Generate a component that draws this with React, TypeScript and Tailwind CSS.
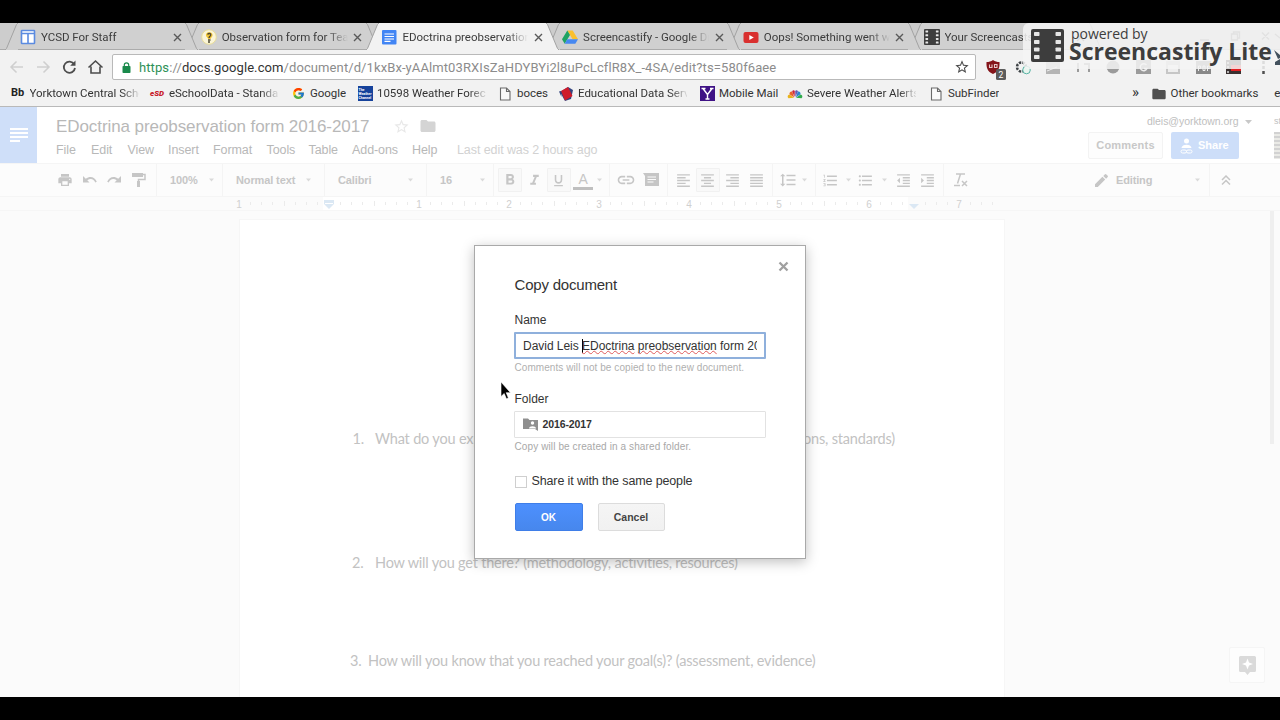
import type { ReactNode } from 'react';
import clsx from 'clsx';
import { FcGoogle } from 'react-icons/fc';
import {
  MdFormatAlignCenter,
  MdFormatAlignJustify,
  MdFormatAlignLeft,
  MdFormatAlignRight,
  MdFormatBold,
  MdFormatIndentDecrease,
  MdFormatIndentIncrease,
  MdFormatItalic,
  MdFormatLineSpacing,
  MdFormatListBulleted,
  MdFormatListNumbered,
  MdFormatUnderlined,
  MdFolder,
  MdInsertLink,
  MdPrint,
  MdStarBorder,
} from 'react-icons/md';

// ─── Favicons ────────────────────────────────────────────────────────────────

function SitesIcon() {
  return (
    <svg width="16" height="16" viewBox="0 0 16 16">
      <rect x="1.5" y="1.5" width="13" height="13" rx="0.5" fill="#fff" stroke="#5b8be0" strokeWidth="1.6" />
      <path d="M1 4.500h14M8 5v10" stroke="#5b8be0" strokeWidth="1.600" />
    </svg>
  );
}

function BulbIcon() {
  return (
    <svg width="16" height="16" viewBox="0 0 16 16">
      <circle cx="8" cy="8" r="7.3" fill="#faf5d8" stroke="#e8dc98" />
      <path d="M8 3.200c3 0 4 2 3.400 3.800-.4 1.300-1.600 1.800-1.800 3H7.200C7 8.800 5.500 8.200 5 6.800 4.500 5 5.700 3.200 8 3.200z" fill="#f0c436" />
      <path d="M6.500 5.500c1-1.600 3.500-1.200 3.300.5C9.600 7.300 8 7.400 8 9M7 11h2.500M7 13h2" stroke="#4a4430" strokeWidth="1.300" fill="none" />
    </svg>
  );
}

function DocsIcon() {
  return (
    <svg width="16" height="16" viewBox="0 0 16 16">
      <rect x="1" y="1" width="14.500" height="14.500" rx="1" fill="#4285f4" />
      <path d="M3.500 5h9.500M3.500 7.500h9.500M3.500 10h9.500M3.500 12.300h6" stroke="#fff" strokeWidth="1.200" />
    </svg>
  );
}

function DriveIcon() {
  return (
    <svg width="16" height="16" viewBox="0 0 16 16">
      <path d="M5.300 1.500h5.400L16 10.300h-5.400z" fill="#fbc02d" />
      <path d="M5.300 1.500L8 6 2.700 14.800 0 10.300z" fill="#1ea362" />
      <path d="M5.300 10.300H16l-2.700 4.500H2.700z" fill="#4688f1" />
    </svg>
  );
}

function YoutubeIcon() {
  return (
    <svg width="16" height="16" viewBox="0 0 16 16">
      <rect x="0.500" y="3" width="15" height="11" rx="2" fill="#d9302f" />
      <path d="M6.300 6v5l4.500-2.500z" fill="#fff" />
    </svg>
  );
}

function FilmIcon({ size = 16, className }: { size?: number; className?: string }) {
  return (
    <svg width={size} height={size} viewBox="0 0 33 33" className={className}>
      <rect width="33" height="33" rx="2" fill="#3d3d3d" />
      <g fill="#e6e6e6">
        {[3, 11, 18.500, 26].map((y) => (
          <g key={y}>
            <rect x="3" y={y} width="5.500" height="4" rx="0.800" />
            <rect x="24.500" y={y} width="5.500" height="4" rx="0.800" />
          </g>
        ))}
      </g>
    </svg>
  );
}

function PageIcon() {
  return (
    <svg width="16" height="16" viewBox="0 0 16 16" fill="none" stroke="#6a6a6a" strokeWidth="1.100">
      <path d="M3.500 2h6l3.500 3.500V14h-9.500z" fill="#fafafa" />
      <path d="M9.500 2v3.500H13" />
    </svg>
  );
}

function PeacockIcon() {
  return (
    <svg width="16" height="16" viewBox="0 0 16 16">
      <path d="M7 11.800L1.500 12.300C0 11 .5 8.800 2.500 8.500z" fill="#e9b31c" />
      <path d="M7.200 11.500L2.500 8.200C2.200 6 4 5 5.300 5.600z" fill="#e8622c" />
      <path d="M7.600 11L5.300 5.500C5.500 4 7.300 3.800 7.800 5z" fill="#c9263c" />
      <path d="M8.400 11L8.200 5c.6-1.200 2.400-1 2.700.5z" fill="#6a55b0" />
      <path d="M8.800 11.500l2-5.900c1.500-.6 3 .6 2.700 2.600z" fill="#2b85cf" />
      <path d="M9 11.800l4.500-3.300c2 .3 2.500 2.500 1 3.800z" fill="#2fab4c" />
    </svg>
  );
}

// ─── Browser tabs ────────────────────────────────────────────────────────────

interface Tab {
  title: string;
  icon: ReactNode;
  z: string;
  active?: boolean;
}

const TABS: Tab[] = [
  { title: 'YCSD For Staff', icon: <SitesIcon />, z: 'z-[6]' },
  { title: 'Observation form for Teachers', icon: <BulbIcon />, z: 'z-[5]' },
  { title: 'EDoctrina preobservation form', icon: <DocsIcon />, z: 'z-[8]', active: true },
  { title: 'Screencastify - Google Drive', icon: <DriveIcon />, z: 'z-[4]' },
  { title: 'Oops! Something went wrong', icon: <YoutubeIcon />, z: 'z-[3]' },
  { title: 'Your Screencasts', icon: <FilmIcon />, z: 'z-[2]' },
];

function BrowserTab({ title, icon, z, active }: Tab) {
  const fill = active ? '#f2f2f2' : '#d0d0d0';
  return (
    <div className={clsx('relative -mr-[12.300px] flex h-[27px] w-[193px] shrink-0', z)}>
      <svg width="13" height="27" viewBox="0 0 13 27" className="shrink-0">
        <path d="M0 27L1.500 25.500 11.500 1.500 13 0v27z" fill={fill} />
        <path d="M0 27L1.500 25.500 11.500 1.500 13 0" fill="none" stroke="#a3a3a3" />
      </svg>
      <div
        className={clsx(
          'flex w-[167px] items-center border-b pt-[2px] pl-[2px]',
          active ? 'border-[#f2f2f2] bg-[#f2f2f2]' : 'border-[#ababab] bg-[#d0d0d0]',
        )}
      >
        <span className="flex w-4 shrink-0 justify-center">{icon}</span>
        <span className="ml-[5px] w-[126px] shrink-0 overflow-hidden pt-px text-[11.500px] tracking-[-0.030px] whitespace-nowrap text-[#3c3c3c] [mask-image:linear-gradient(to_right,black_105px,transparent_126px)]">
          {title}
        </span>
        <svg width="9" height="9" viewBox="0 0 9 9" className="ml-[5.500px] shrink-0">
          <path d="M1 1l7 7M8 1L1 8" stroke="#5a5a5a" strokeWidth="1.400" />
        </svg>
      </div>
      <svg width="13" height="27" viewBox="0 0 13 27" className="shrink-0">
        <path d="M13 27l-1.500-1.500L1.500 1.500 0 0v27z" fill={fill} />
        <path d="M13 27l-1.500-1.500L1.500 1.500 0 0" fill="none" stroke="#a3a3a3" />
      </svg>
    </div>
  );
}

// ─── Address bar ─────────────────────────────────────────────────────────────

function AddressRow() {
  return (
    <div className="flex h-[34px] items-center">
      <div className="flex w-[112px] shrink-0 items-center">
        <svg width="112" height="18" viewBox="0 0 112 18" fill="none" strokeWidth="1.500">
          <path d="M23 9H11M16.500 3.500L11 9l5.500 5.500M37 9h12M43.500 3.500L49 9l-5.500 5.500" stroke="#cfcfcf" />
          <path d="M74.200 6.200A5.600 5.600 0 1 0 75 10" stroke="#4d4d4d" strokeWidth="1.800" />
          <path d="M75.500 2.500v5.300h-5.300z" fill="#4d4d4d" />
          <path d="M88.500 9.500L95.500 3l7 6.500M91 8.500V15h9V8.500" stroke="#4d4d4d" strokeWidth="1.600" />
        </svg>
      </div>
      <div className="flex h-[26px] w-[864px] shrink-0 items-center rounded-[2px] border border-[#b9b9b9] bg-white pl-[9px]">
        <svg width="9" height="11" viewBox="0 0 9 11">
          <rect x="0.500" y="4" width="8" height="7" rx="0.800" fill="#1a8a4c" />
          <path d="M2.300 4.500V3a2.200 2.200 0 0 1 4.400 0v1.500" fill="none" stroke="#1a8a4c" strokeWidth="1.200" />
        </svg>
        <span className="ml-[8px] pt-px text-[13px] tracking-[0.095px] whitespace-nowrap text-[#8c8c8c]">
          <span className="text-[#2e9157]">https</span>://<span className="text-[#333]">docs.google.com</span>
          /document/d/1kxBx-yAAlmt03RXIsZaHDYBYi2l8uPcLcflR8X_-4SA/edit?ts=580f6aee
        </span>
        <MdStarBorder className="mr-[5px] ml-auto h-[16px] w-[16px] text-[#4a4a4a]" />
      </div>
      <Extensions />
    </div>
  );
}

function Extensions() {
  return (
    <svg width="304" height="26" viewBox="976 54 304 26" className="shrink-0">
      {/* uBlock shield with its counter */}
      <path d="M993 60c2 1.500 4 2 6.500 2 .3 6-1 9.500-6.500 12-5.500-2.500-6.800-6-6.500-12 2.500 0 4.500-.5 6.500-2z" fill="#84141a" />
      <path d="M989.500 64.500v3h2.500v-3M994.500 64.500h2.500v3h-2.500z" fill="none" stroke="#e6c7c8" strokeWidth="1.100" />
      <rect x="996" y="69" width="10" height="11" rx="1.500" fill="#5c5c5c" />
      <text x="998.500" y="77.800" fontSize="8.500" fill="#fff">2</text>
      <circle cx="1021.500" cy="67" r="4.500" fill="none" stroke="#3d4245" strokeWidth="2.500" strokeDasharray="2.400 1.200" />
      <circle cx="1026.500" cy="70" r="3.800" fill="#e9f5ef" stroke="#56b3a4" />
      <g fill="#9b9b9b">
        <path d="M1046 61h14v13h-14z" fill="#b5b5b5" />
        <path d="M1047 71l10-4" stroke="#eee" />
        <path d="M1077 63h2v9h-2zM1084 63h6v2h-6zM1088 65h2v7h-2z" />
        <circle cx="1113" cy="67" r="6.500" />
        <path d="M1136 60h15v14h-15z" />
        <path d="M1166 61h14v13h-14z" fill="#c6c6c6" />
        <path d="M1168 65h10v7h-10z" fill="#eee" />
        <path d="M1196 61h15v13h-15z" fill="#888" />
      </g>
      {/* G and PDF badges */}
      <path d="M1146.500 65a3.500 3.500 0 1 0 .5 3.500h-3" fill="none" stroke="#eee" strokeWidth="1.400" />
      <path d="M1198.500 71v-5h2v2.500h-2M1203 66v4.500h2v-4.500zM1207.500 71v-5h2.500M1207.500 68.500h2" fill="none" stroke="#eee" />
      <rect x="1226" y="60" width="15" height="14" fill="#3a3030" />
      <rect x="1231" y="65" width="10" height="6" fill="#e21e22" />
      <path d="M1228 62v2M1228 66v2M1228 71v2" stroke="#ddd" strokeWidth="1.500" />
      <path d="M1263.500 61v3M1263.500 66v3M1263.500 71v3" stroke="#505050" strokeWidth="2.500" />
    </svg>
  );
}

// ─── Bookmarks bar ───────────────────────────────────────────────────────────

interface Bookmark {
  label: string;
  icon: ReactNode;
  width: string;
  fade?: boolean;
}

const BOOKMARKS: Bookmark[] = [
  { label: 'Yorktown Central School', icon: <span className="text-[11px] font-bold text-[#222]">Bb</span>, width: 'w-[139.500px]', fade: true },
  { label: 'eSchoolData - Standard', icon: <span className="text-[8px] font-black text-[#c8202c] italic">eSD</span>, width: 'w-[141px]', fade: true },
  { label: 'Google', icon: <FcGoogle className="h-[13px] w-[13px]" />, width: 'w-[67px]' },
  {
    label: '10598 Weather Forecast',
    icon: (
      <span className="flex h-[15px] w-[15px] flex-col justify-center overflow-hidden bg-[#16429b] pl-px text-[3.500px] leading-[4px] font-bold text-white">
        <span>The</span>
        <span>Weather</span>
        <span>Channel</span>
      </span>
    ),
    width: 'w-[140px]',
    fade: true,
  },
  { label: 'boces', icon: <PageIcon />, width: 'w-[61px]' },
  {
    label: 'Educational Data Services',
    icon: (
      <svg width="16" height="16" viewBox="0 0 16 16">
        <path d="M2 6l8-5 5 3-2 9-6 2z" fill="#33447f" />
        <path d="M3 5l7-4 4.500 9L7 14.500z" fill="#cf1b2a" />
        <path d="M3 5L1 5.500 3.500 11z" fill="#33447f" />
      </svg>
    ),
    width: 'w-[141px]',
    fade: true,
  },
  {
    label: 'Mobile Mail',
    icon: (
      <svg width="15" height="15" viewBox="0 0 15 15">
        <path d="M0 0h15v15H0z" fill="#3f1285" />
        <path d="M3 2.500l4.500 6 4.500-6M7.500 8v5M1.500 2.500h4M10 2.500h3.500M5.500 13h4" fill="none" stroke="#fff" strokeWidth="1.400" />
      </svg>
    ),
    width: 'w-[88px]',
  },
  { label: 'Severe Weather Alerts', icon: <PeacockIcon />, width: 'w-[141px]', fade: true },
  { label: 'SubFinder', icon: <PageIcon />, width: 'w-[80px]' },
];

function BookmarksBar() {
  return (
    <div className="flex h-[23px] items-center border-b border-[#b9b9b9] pb-[3px] pl-[9.500px] text-[11.500px] tracking-[-0.030px] text-[#333]">
      {BOOKMARKS.map((b) => (
        <div key={b.label} className={clsx('flex shrink-0 items-center', b.width)}>
          <span className="flex w-4 shrink-0 justify-center">{b.icon}</span>
          <span
            className={clsx(
              'ml-1 overflow-hidden whitespace-nowrap',
              b.fade && 'w-[109px] [mask-image:linear-gradient(to_right,black_92px,transparent_111px)]',
            )}
          >
            {b.label}
          </span>
        </div>
      ))}
      <span className="ml-[124px] pb-[2px] text-[15px] leading-none">»</span>
      <MdFolder className="ml-[11.500px] h-4 w-4 shrink-0 text-[#505050]" />
      <span className="ml-[4px] whitespace-nowrap">Other bookmarks</span>
      <span className="ml-[16px] w-[6px] overflow-hidden whitespace-nowrap">es</span>
    </div>
  );
}

// ─── Recorder watermark ──────────────────────────────────────────────────────

function Watermark() {
  return (
    <div className="absolute top-0 right-0 z-20 flex h-[46px] w-[257px] overflow-hidden rounded-l-md bg-[#f5f5f5]/85 pt-[6px] pl-[8px] font-['Open_Sans','Noto_Sans',sans-serif] text-[#3d3d3d]">
      <FilmIcon size={33} className="shrink-0" />
      <div className="-mt-px ml-[5px] whitespace-nowrap">
        <div className="pl-[2px] text-[14px] leading-[11px] tracking-[-0.050px]">powered by</div>
        <div className="text-[23px] leading-[24px] font-bold">Screencastify Lite</div>
      </div>
      <svg width="6" height="16" viewBox="0 0 6 16" className="mt-[21px] ml-[2px] shrink-0">
        <path d="M0 0l6 5v3L4 9zM1 12l5-3v6H1z" fill="#44525e" />
      </svg>
    </div>
  );
}

function WindowButtons() {
  return (
    <svg width="80" height="27" viewBox="0 0 80 27" className="ml-auto shrink-0" fill="none" stroke="#777" strokeWidth="1.300">
      <path d="M0 17h9M31.500 11h6v6h-6zM33.500 11V9h6v6h-2M62 9.500l7 7M69 9.500l-7 7M75 11l5 4" />
    </svg>
  );
}

// ─── Docs header ─────────────────────────────────────────────────────────────

const MENU = [
  { label: 'File', width: 'w-[35px]' },
  { label: 'Edit', width: 'w-[36.500px]' },
  { label: 'View', width: 'w-[40.500px]' },
  { label: 'Insert', width: 'w-[45px]' },
  { label: 'Format', width: 'w-[53.500px]' },
  { label: 'Tools', width: 'w-[42px]' },
  { label: 'Table', width: 'w-[43.500px]' },
  { label: 'Add-ons', width: 'w-[60px]' },
  { label: 'Help', width: 'w-[45px]' },
];

function DocsHeader() {
  return (
    <div className="flex h-[56px] bg-white">
      <div className="flex w-[37px] items-center justify-center bg-[#cfdff9]">
        <svg width="18" height="14" viewBox="0 0 18 14">
          <path d="M0 1h18M0 5h18M0 9h18M0 13h10" stroke="#fff" strokeWidth="1.800" />
        </svg>
      </div>
      <div className="ml-[19px] flex flex-col pt-[8px]">
        <div className="flex h-[22px] items-center">
          <span className="w-[337px] pt-px text-[17px] tracking-[-0.080px] whitespace-nowrap text-[#b8b8b8]">
            EDoctrina preobservation form 2016-2017
          </span>
          <MdStarBorder className="h-[17px] w-[17px] text-[#e8e8e8]" />
          <MdFolder className="ml-[9px] h-[18px] w-[18px] text-[#d4d4d4]" />
        </div>
        <div className="mt-[4px] flex h-[18px] items-center text-[12.500px] tracking-[-0.080px] text-[#b8b8b8]">
          {MENU.map((m) => (
            <span key={m.label} className={m.width}>
              {m.label}
            </span>
          ))}
          <span className="whitespace-nowrap text-[#d2d2d2]">Last edit was 2 hours ago</span>
        </div>
      </div>
      <div className="ml-auto flex w-[192px] flex-col pt-[7px]">
        <div className="flex h-[15px] items-center pl-[59px] text-[10.500px] tracking-[-0.050px] text-[#c0c0c0]">
          <span className="w-[98px]">dleis@yorktown.org</span>
          <Caret />
          <span className="ml-[22px] w-[6px] overflow-hidden text-[9px]">st</span>
        </div>
        <div className="mt-[3px] flex h-[27px] items-center text-[11px] font-bold">
          <span className="flex h-[27px] w-[75px] items-center justify-center rounded-[2px] border border-[#f3f3f3] bg-[#fdfdfd] tracking-[0.200px] text-[#c8c8c8]">
            Comments
          </span>
          <span className="ml-[8px] flex h-[27px] w-[68px] items-center rounded-[2px] bg-[#cddef9] pl-[9px] text-white">
            <svg width="13" height="16" viewBox="0 0 13 16" fill="#fff">
              <circle cx="6.500" cy="3" r="2.500" />
              <path d="M1.500 10C1.500 5.500 11.500 5.500 11.500 10z" />
              <path d="M1 13.500a1.500 1.500 0 0 1 1.500-1.500H5a1.500 1.500 0 0 1 0 3H2.500A1.500 1.500 0 0 1 1 13.500zM6.500 13.500A1.500 1.500 0 0 1 8 12h2.500a1.500 1.500 0 0 1 0 3H8a1.500 1.500 0 0 1-1.500-1.500z" fill="none" stroke="#fff" />
            </svg>
            <span className="ml-[5px]">Share</span>
          </span>
          <span className="ml-auto h-[27px] w-[6px] bg-[repeating-linear-gradient(#d2d2d2_0_2px,#eaeae6_2px_4px)]" />
        </div>
      </div>
    </div>
  );
}

// ─── Docs toolbar ────────────────────────────────────────────────────────────

function Caret({ small }: { small?: boolean }) {
  return (
    <svg width="7" height="4" viewBox="0 0 7 4" className="shrink-0">
      <path d={small ? 'M1 0.500h5L3.500 3.500z' : 'M0 0h7L3.500 4z'} fill={small ? '#dadada' : '#c8c8c8'} />
    </svg>
  );
}

function Cell({ children, width = 'w-[24.500px]', on }: { children: ReactNode; width?: string; on?: boolean }) {
  return (
    <span
      className={clsx(
        'flex h-[24px] shrink-0 items-center justify-center',
        width,
        on && 'rounded-[1px] border border-[#f1f1f1] bg-[#f9f9f9]',
      )}
    >
      {children}
    </span>
  );
}

function Group({ children, width }: { children?: ReactNode; width: string }) {
  return <div className={clsx('flex h-full shrink-0 items-center border-l border-[#f4f4f4]', width)}>{children}</div>;
}

function Picker({ label, width, inset = 'mr-[7px]' }: { label: string; width: string; inset?: string }) {
  return (
    <Group width={width}>
      <span className="ml-[13px] tracking-[-0.120px] whitespace-nowrap">{label}</span>
      <span className={clsx('ml-auto', inset)}>
        <Caret small />
      </span>
    </Group>
  );
}

function UndoArrow({ flip }: { flip?: boolean }) {
  return (
    <svg width="14" height="8" viewBox="0 0 14 8" className={clsx(flip && '-scale-x-100')}>
      <path
        d="M0 0v6.500h6.500L4.300 4.300C7.500 1.800 11 3 12.200 6.500l1.600-.7C11.800.5 6.500-.2 2.800 2.800z"
        fill="currentColor"
      />
    </svg>
  );
}

function DocsToolbar() {
  return (
    <div className="flex h-[34px] items-center border-y border-[#f5f5f5] bg-[#fcfcfc] text-[11px] font-bold text-[#c6c6c6]">
      <div className="flex w-[156px] shrink-0 items-center pl-[53px]">
        <Cell>
          <MdPrint className="h-[16px] w-[16px]" />
        </Cell>
        <Cell>
          <UndoArrow />
        </Cell>
        <Cell>
          <UndoArrow flip />
        </Cell>
        <Cell>
          <svg width="14" height="16" viewBox="0 0 14 16">
            <path d="M0 1h11v4H0z" fill="currentColor" />
            <path d="M11 2.500h2V7.500H6.500V15" fill="none" stroke="currentColor" strokeWidth="1.500" />
            <path d="M5 9h3v6H5z" fill="currentColor" />
          </svg>
        </Cell>
      </div>
      <Picker label="100%" width="w-[66px]" />
      <Picker label="Normal text" width="w-[102px]" inset="mr-[12px]" />
      <Picker label="Calibri" width="w-[102px]" inset="mr-[12px]" />
      <Picker label="16" width="w-[67px]" />
      <Group width="w-[116px]">
        <span className="w-[3.500px]" />
        <Cell on>
          <MdFormatBold className="h-[18px] w-[18px]" />
        </Cell>
        <Cell>
          <MdFormatItalic className="h-[17px] w-[17px]" />
        </Cell>
        <Cell on>
          <MdFormatUnderlined className="h-[15px] w-[15px]" />
        </Cell>
        <Cell>
          <span className="flex flex-col items-center pt-[2px] text-[14px] leading-[15px] font-normal">
            A
            <span className="h-[3px] w-[20px] bg-[#bfbfbf]" />
          </span>
        </Cell>
        <Caret small />
      </Group>
      <Group width="w-[58px]">
        <span className="w-[4px]" />
        <Cell>
          <MdInsertLink className="h-[20px] w-[20px]" />
        </Cell>
        <Cell>
          <svg width="16" height="15" viewBox="0 0 16 15">
            <path d="M0 0h16v13H2V3z" fill="currentColor" />
            <path d="M4.500 4h8.500M4.500 6.500h8.500M4.500 9h6" stroke="#fcfcfc" />
          </svg>
        </Cell>
      </Group>
      <Group width="w-[105px]">
        <span className="w-[3px]" />
        <Cell>
          <MdFormatAlignLeft className="h-[17px] w-[17px]" />
        </Cell>
        <Cell on>
          <MdFormatAlignCenter className="h-[17px] w-[17px]" />
        </Cell>
        <Cell>
          <MdFormatAlignRight className="h-[17px] w-[17px]" />
        </Cell>
        <Cell>
          <MdFormatAlignJustify className="h-[17px] w-[17px]" />
        </Cell>
      </Group>
      <Group width="w-[43px]">
        <span className="w-[3px]" />
        <Cell>
          <MdFormatLineSpacing className="h-[18px] w-[18px]" />
        </Cell>
        <Caret small />
      </Group>
      <Group width="w-[128px]">
        <span className="w-[2px]" />
        <Cell>
          <MdFormatListNumbered className="h-[17px] w-[17px]" />
        </Cell>
        <Cell width="w-[11px]">
          <Caret small />
        </Cell>
        <Cell>
          <MdFormatListBulleted className="h-[17px] w-[17px]" />
        </Cell>
        <Cell width="w-[13px]">
          <Caret small />
        </Cell>
        <Cell>
          <MdFormatIndentDecrease className="h-[17px] w-[17px]" />
        </Cell>
        <Cell>
          <MdFormatIndentIncrease className="h-[17px] w-[17px]" />
        </Cell>
      </Group>
      <Group width="w-[146px]">
        <span className="w-[4px]" />
        <Cell>
          <svg width="15" height="14" viewBox="0 0 15 14" fill="none" stroke="currentColor" strokeWidth="1.500">
            <path d="M3 1h9M7.500 1L4.500 10.500M1 12.500h6M9 8l5 5M14 8l-5 5" />
          </svg>
        </Cell>
      </Group>
      <div className="flex w-[120px] shrink-0 items-center pl-[6px]">
        <svg width="13" height="13" viewBox="0 0 13 13" fill="currentColor">
          <path d="M0 10.200V13h2.800l7.400-7.400-2.800-2.800zM8.300 1.900l1.400-1.400a1.200 1.200 0 0 1 1.700 0l1.100 1.100a1.200 1.200 0 0 1 0 1.700l-1.400 1.400z" />
        </svg>
        <span className="ml-[8px] tracking-[-0.150px]">Editing</span>
        <span className="mr-[8px] ml-auto">
          <Caret small />
        </span>
      </div>
      <Group width="w-[71px]">
        <span className="w-[4px]" />
        <Cell>
          <svg width="10" height="10" viewBox="0 0 10 10" fill="none" stroke="currentColor" strokeWidth="1.500">
            <path d="M1 5l4-4 4 4M1 9.500l4-4 4 4" />
          </svg>
        </Cell>
      </Group>
    </div>
  );
}

// 68 eighths of an inch, starting at the left page edge
const RULER_TICKS = Array.from({ length: 68 }, (_, i) => i);
const RULER_LABELS = ['1', '', '1', '2', '3', '4', '5', '6', '7'];

function Ruler() {
  return (
    <div className="flex h-[14px] items-center border-b border-[#f6f6f6] bg-[#fbfbfb] pl-[233.400px] text-[10px] text-[#d0d0d0]">
      {RULER_TICKS.map((i) => {
        const inside = i >= 8 && i < 60;
        return (
          <span
            key={i}
            className={clsx('flex h-full w-[11.250px] shrink-0 items-center justify-center', inside && 'bg-white')}
          >
            {i === 8 && (
              <svg width="10" height="9" viewBox="0 0 10 9" className="mt-[2px]">
                <path d="M0 0h10v4L5 9 0 4z" fill="#dbe8f4" />
                <path d="M1 3.500h8" stroke="#fff" />
              </svg>
            )}
            {i === 60 && (
              <svg width="10" height="5" viewBox="0 0 10 5" className="mt-[5px]">
                <path d="M0 0h10L5 5z" fill="#dbe8f4" />
              </svg>
            )}
            {i % 8 === 0 && i !== 8 && <span className="pt-px">{RULER_LABELS[i / 8]}</span>}
            {i % 8 !== 0 && i !== 60 && <span className={clsx('w-px bg-[#ebebeb]', i % 4 === 0 ? 'h-[5px]' : 'h-[3px]')} />}
          </span>
        );
      })}
    </div>
  );
}

// ─── Document ────────────────────────────────────────────────────────────────

function DocumentPage() {
  return (
    <div className="flex h-[486px] bg-[#fbfbfb] pt-[8px]">
      <div className="ml-[239px] h-[478px] w-[766px] border border-b-0 border-[#f6f6f6] bg-white pt-[208px] font-['Lato',sans-serif] text-[14.500px] tracking-[-0.180px] whitespace-nowrap text-[#c2c2c2]">
        <div className="flex h-[22px] items-center pl-[112.500px]">
          <span className="w-[22.500px]">1.</span>
          <span className="w-[428px]">What do you exp</span>
          <span>ons, standards)</span>
        </div>
        <div className="mt-[102px] flex h-[22px] items-center pl-[112px]">
          <span className="w-[23px]">2.</span>
          <span className="tracking-[-0.210px]">How will you get there? (methodology, activities, resources)</span>
        </div>
        <div className="mt-[76px] flex h-[22px] items-center pl-[110px]">
          <span className="w-[18px]">3.</span>
          <span>How will you know that you reached your goal(s)? (assessment, evidence)</span>
        </div>
      </div>
      <div className="ml-auto flex w-[51px] flex-col">
        <span className="-mt-[8px] ml-[41px] h-[233px] w-[4px] bg-[#efefef]" />
        <span className="mt-[203px] flex h-[36px] w-[36px] items-center justify-center rounded-[2px] border border-[#f5f5f5] bg-[#fdfdfd]">
          <svg width="17" height="19" viewBox="0 0 17 19">
            <path d="M1.500 0h14A1.500 1.500 0 0 1 17 1.500v13a1.500 1.500 0 0 1-1.500 1.500H11l-2.500 3L6 16H1.500A1.500 1.500 0 0 1 0 14.500v-13A1.500 1.500 0 0 1 1.500 0z" fill="#dadada" />
            <path d="M8.500 2.500L10 6.500l4 1.500-4 1.500-1.500 4L7 9.500 3 8l4-1.500z" fill="#fff" />
          </svg>
        </span>
      </div>
    </div>
  );
}

// ─── Copy dialog ─────────────────────────────────────────────────────────────

function CopyDialog() {
  const misspelt =
    'underline decoration-[#e05a5a] decoration-wavy decoration-1 underline-offset-[0px] [text-decoration-skip-ink:none]';
  return (
    <div className="absolute top-[245px] left-[474px] z-30 flex h-[314px] w-[332px] flex-col border border-[#a9a9a9] bg-white pl-[39px] text-[#333] shadow-[0_3px_12px_rgba(0,0,0,0.250)]">
      <svg width="11" height="11" viewBox="0 0 11 11" className="mt-[15px] mr-[16px] shrink-0 self-end">
        <path d="M1.500 1.500l8 8M9.500 1.500l-8 8" stroke="#a0a0a0" strokeWidth="2.300" />
      </svg>
      <h2 className="mt-[3px] pl-[0.500px] text-[15px] leading-[20px] tracking-[-0.200px]">Copy document</h2>
      <label className="mt-[18px] pl-[0.500px] text-[12px] leading-[15px]">Name</label>
      <div className="mt-[4px] flex h-[27px] w-[252px] shrink-0 items-center rounded-[1px] border-2 border-[#8fb0dc] px-[7px]">
        <div className="w-[234px] overflow-hidden text-[12px] leading-[18px] tracking-[-0.030px] whitespace-pre">
          David Leis <span className="-mr-px inline-block h-[14px] w-px bg-black align-[-3px]" />
          <span className={misspelt}>EDoctrina</span> <span className={misspelt}>preobservation</span> form 2016-2017
        </div>
      </div>
      <p className="mt-[2px] pl-[0.500px] text-[10px] leading-[14px] tracking-[0.070px] text-[#b0b0b0]">
        Comments will not be copied to the new document.
      </p>
      <label className="mt-[17px] pl-[0.500px] text-[12px] leading-[15px]">Folder</label>
      <div className="mt-[4px] flex h-[27px] w-[252px] shrink-0 items-center rounded-[1px] border border-[#e2e2e2] pl-[8px] text-[10.500px] font-bold">
        <svg width="15" height="13" viewBox="0 0 15 13">
          <path d="M0 .5h5L6.500 2H15v11l-3-2H0z" fill="#8f8f8f" />
          <circle cx="9.500" cy="5" r="1.700" fill="#fff" />
          <path d="M6 10.500c0-3 7-3 7 0z" fill="#fff" />
        </svg>
        <span className="ml-[4.500px] tracking-[-0.100px]">2016-2017</span>
      </div>
      <p className="mt-[2px] pl-[0.500px] text-[10px] leading-[14px] tracking-[0.110px] text-[#a8a8a8]">
        Copy will be created in a shared folder.
      </p>
      <div className="mt-[18px] flex h-[18px] items-center pl-px">
        <span className="mt-px h-[12px] w-[12px] border border-[#cfcfcf]" />
        <span className="ml-[4.500px] text-[12.500px] tracking-[-0.130px]">Share it with the same people</span>
      </div>
      <div className="mt-[13px] flex gap-[15px] pl-[0.500px] text-[11px] font-bold">
        <button
          type="button"
          className="h-[28px] w-[68px] rounded-[2px] border border-[#3f7ee8] bg-gradient-to-b from-[#4d90fe] to-[#4787ed] text-[10px] text-white"
        >
          OK
        </button>
        <button
          type="button"
          className="h-[28px] w-[67px] rounded-[2px] border border-[#dcdcdc] bg-gradient-to-b from-[#f5f5f5] to-[#f1f1f1] pt-px text-[10.500px] text-[#444]"
        >
          Cancel
        </button>
      </div>
    </div>
  );
}

function MousePointer() {
  return (
    <svg width="11" height="20" viewBox="0 0 11 20" className="absolute top-[381px] left-[500px] z-40">
      <path d="M1 1v14.500l3.200-3 2.200 5.300 2-.9-2.200-5.200H10.500z" fill="#000" stroke="#fff" strokeWidth="0.600" />
    </svg>
  );
}

export default function App() {
  return (
    <div className="relative flex h-[720px] w-[1280px] flex-col overflow-hidden bg-black py-[23px] font-['Liberation_Sans',Arial,sans-serif]">
      <div className="relative h-[84px] shrink-0 overflow-hidden bg-[#f2f2f2] font-['Roboto',sans-serif]">
        <div className="flex h-[27px] border-b border-[#ababab] bg-[#cdcdcd] pl-[5px]">
          {TABS.map((tab) => (
            <BrowserTab key={tab.title} {...tab} />
          ))}
          <WindowButtons />
        </div>
        <AddressRow />
        <BookmarksBar />
        <Watermark />
      </div>
      <DocsHeader />
      <DocsToolbar />
      <Ruler />
      <DocumentPage />
      <CopyDialog />
      <MousePointer />
    </div>
  );
}
